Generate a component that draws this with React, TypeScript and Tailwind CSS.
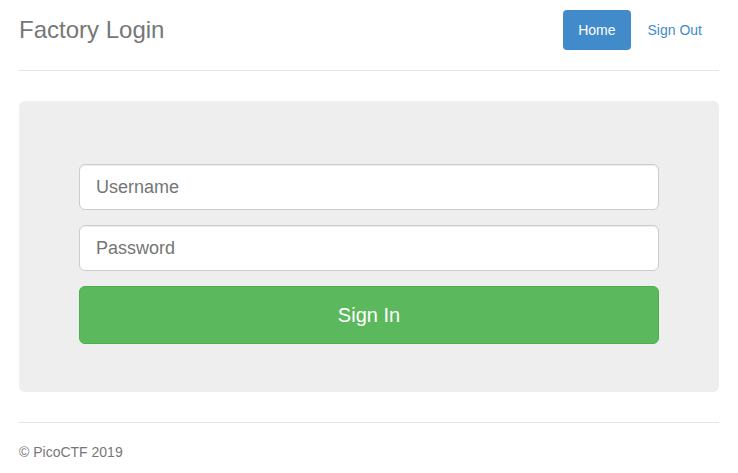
export default function App() {
  return (
    <div className="min-h-screen bg-white font-['Liberation_Sans',Arial,sans-serif] text-[14px] text-[#333]">
      <div className="mx-auto w-[730px] px-[15px]">
        {/* header */}
        <div className="flex items-start justify-between border-b border-[#e5e5e5] pt-[10px] pb-[20px]">
          <h3 className="m-0 text-[24px] leading-[40px] text-[#777]">Factory Login</h3>
          <ul className="flex pr-[2px]">
            <li>
              <a className="block rounded-[4px] bg-[#428bca] px-[15px] py-[10px] leading-[20px] text-white">
                Home
              </a>
            </li>
            <li className="ml-[2px]">
              <a className="block px-[15px] py-[10px] leading-[20px] text-[#428bca]">Sign Out</a>
            </li>
          </ul>
        </div>

        {/* jumbotron */}
        <div className="mt-[30px] rounded-[6px] bg-[#eeeeee] px-[60px] pt-[63px] pb-[48px]">
          <form className="flex flex-col">
            <input
              type="text"
              placeholder="Username"
              className="h-[46px] rounded-[6px] border border-[#ccc] bg-white px-[16px] text-[18px] text-[#555] shadow-[inset_0_1px_1px_rgba(0,0,0,0.075)] outline-none placeholder:text-[#757575]"
            />
            <input
              type="password"
              placeholder="Password"
              className="mt-[15px] h-[46px] rounded-[6px] border border-[#ccc] bg-white px-[16px] text-[18px] text-[#555] shadow-[inset_0_1px_1px_rgba(0,0,0,0.075)] outline-none placeholder:text-[#757575]"
            />
            <button
              type="button"
              className="mt-[15px] h-[58px] rounded-[6px] border border-[#4cae4c] bg-[#5cb85c] text-[20px] text-white"
            >
              Sign In
            </button>
          </form>
        </div>

        {/* footer */}
        <div className="mt-[30px] border-t border-[#e5e5e5] pt-[19px]">
          <p className="m-0 leading-[20px] text-[#777]">© PicoCTF 2019</p>
        </div>
      </div>
    </div>
  );
}
